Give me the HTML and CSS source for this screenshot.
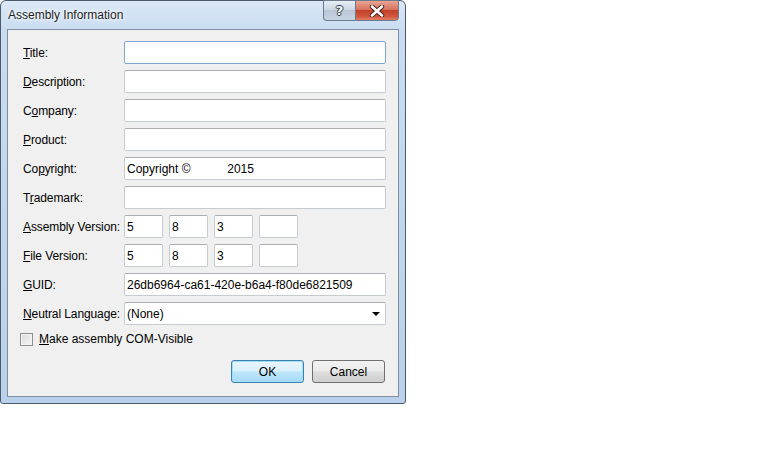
FILE: index.html
```html
<!DOCTYPE html>
<html lang="en">
<head>
    <meta charset="UTF-8">
    <title>Assembly Information</title>
    <link rel="stylesheet" href="styles.css">
</head>
<body>
    <div class="window">
        <div class="titlebar">
            <span class="title">Assembly Information</span>
            <div class="caption-btns">
                <div class="cap-btn help">?</div>
                <div class="cap-btn close">
                    <svg width="16" height="12" viewBox="0 0 16 12">
                        <path d="M3 1.5 L13 10.5 M13 1.5 L3 10.5" stroke="#4a1f18" stroke-width="4.4" stroke-linecap="round"/>
                        <path d="M3 1.5 L13 10.5 M13 1.5 L3 10.5" stroke="#ffffff" stroke-width="2.6" stroke-linecap="round"/>
                    </svg>
                </div>
            </div>
        </div>
        <div class="client">
            <div class="form">
                <label><u>T</u>itle:</label>
                <div class="field focused"></div>

                <label><u>D</u>escription:</label>
                <div class="field"></div>

                <label>C<u>o</u>mpany:</label>
                <div class="field"></div>

                <label><u>P</u>roduct:</label>
                <div class="field"></div>

                <label>Co<u>p</u>yright:</label>
                <div class="field">Copyright ©&nbsp;&nbsp;&nbsp;&nbsp;&nbsp;&nbsp;&nbsp;&nbsp;&nbsp;&nbsp;&nbsp;2015</div>

                <label>T<u>r</u>ademark:</label>
                <div class="field"></div>

                <label><u>A</u>ssembly Version:</label>
                <div class="versions">
                    <div class="field small">5</div>
                    <div class="field small">8</div>
                    <div class="field small">3</div>
                    <div class="field small"></div>
                </div>

                <label><u>F</u>ile Version:</label>
                <div class="versions">
                    <div class="field small">5</div>
                    <div class="field small">8</div>
                    <div class="field small">3</div>
                    <div class="field small"></div>
                </div>

                <label><u>G</u>UID:</label>
                <div class="field">26db6964-ca61-420e-b6a4-f80de6821509</div>

                <label><u>N</u>eutral Language:</label>
                <div class="field combo">
                    <span class="combo-text">(None)</span>
                    <svg width="8" height="4" viewBox="0 0 8 4"><path d="M0 0 H8 L4 4 Z" fill="#000"/></svg>
                </div>
            </div>

            <div class="check-row">
                <span class="checkbox"></span>
                <span><u>M</u>ake assembly COM-Visible</span>
            </div>

            <div class="buttons">
                <div class="btn default">OK</div>
                <div class="btn">Cancel</div>
            </div>
        </div>
    </div>
</body>
</html>
```

FILE: styles.css
```css
body {
    margin: 0;
    background: #ffffff;
    font-family: "Liberation Sans", Arial, sans-serif;
    font-size: 12px;
    color: #000000;
}
.window {
    width: 404px;
    height: 402px;
    border: 1px solid #4a5a6c;
    border-radius: 6px 6px 3px 3px;
    background: linear-gradient(180deg, #dbe8f6 0px, #c9dcf1 30px, #b9d1ea 100%);
    display: flex;
    flex-direction: column;
}
.titlebar {
    height: 28px;
    display: flex;
    justify-content: space-between;
    align-items: flex-start;
    padding-left: 7px;
}
.title {
    margin-top: 7px;
    color: #1e1e1e;
    text-shadow: 0 0 6px #ffffff, 0 0 3px #ffffff;
}
.caption-btns {
    display: flex;
    margin-right: 6px;
    margin-top: -1px;
}
.cap-btn {
    height: 19px;
    border: 1px solid #6b7a8d;
    display: flex;
    align-items: center;
    justify-content: center;
}
.help {
    width: 31px;
    border-right: none;
    border-radius: 0 0 0 4px;
    background: linear-gradient(180deg, #e6edf5 0%, #cdd8e5 45%, #b9c6d6 50%, #c8d4e2 100%);
    color: #ffffff;
    font-family: "DejaVu Sans", sans-serif;
    font-weight: bold;
    font-size: 13px;
    text-shadow: 1px 0 0 #2e3b4c, -1px 0 0 #2e3b4c, 0 1px 0 #2e3b4c, 0 -1px 0 #2e3b4c;
}
.close {
    width: 42px;
    border-radius: 0 0 4px 0;
    background: linear-gradient(180deg, #e7a593 0%, #d8725c 45%, #c2412a 50%, #d0553a 80%, #e0806a 100%);
}
.client {
    flex: 1;
    margin: 0 6px 6px 6px;
    border: 1px solid #7f8fa1;
    background: #f0f0f0;
    padding: 11px 12px 0 15px;
}
.form {
    display: grid;
    grid-template-columns: 101px 262px;
    grid-auto-rows: 23px;
    row-gap: 6px;
    align-items: center;
}
.form label {
    line-height: 23px;
    padding-top: 2px;
    letter-spacing: -0.1px;
}
.field {
    height: 21px;
    border: 1px solid #c6cbd1;
    border-top-color: #abadb3;
    border-radius: 2px;
    background: #ffffff;
    line-height: 23px;
    padding-left: 2px;
    white-space: nowrap;
}
.field.focused {
    border-color: #7fa6cf;
}
.versions {
    display: flex;
    gap: 6px;
}
.field.small {
    box-sizing: border-box;
    width: 39px;
    height: 23px;
}
.combo {
    display: flex;
    justify-content: space-between;
    align-items: center;
    padding-right: 5px;
}
.combo-text {
    padding-top: 2px;
}
.check-row {
    display: flex;
    align-items: center;
    gap: 6px;
    margin-top: 7px;
    margin-left: -3px;
}
.checkbox {
    width: 11px;
    height: 11px;
    border: 1px solid #8e8f8f;
    background: linear-gradient(135deg, #dcdcdc 0%, #f6f6f6 100%);
    box-shadow: inset 0 0 0 1px #f4f4f4;
}
.buttons {
    display: flex;
    justify-content: flex-end;
    gap: 8px;
    margin-top: 14px;
    margin-right: 1px;
}
.btn {
    width: 71px;
    height: 21px;
    border: 1px solid #707070;
    border-radius: 3px;
    background: linear-gradient(180deg, #f2f2f2 0%, #ebebeb 48%, #dddddd 52%, #cfcfcf 100%);
    text-align: center;
    line-height: 22px;
}
.btn.default {
    border-color: #3c7fb1;
    background: linear-gradient(180deg, #eaf6fd 0%, #d9f0fc 48%, #bee6fd 52%, #a7d9f5 100%);
    box-shadow: inset 0 0 0 1px #9fe0f9;
}
```
